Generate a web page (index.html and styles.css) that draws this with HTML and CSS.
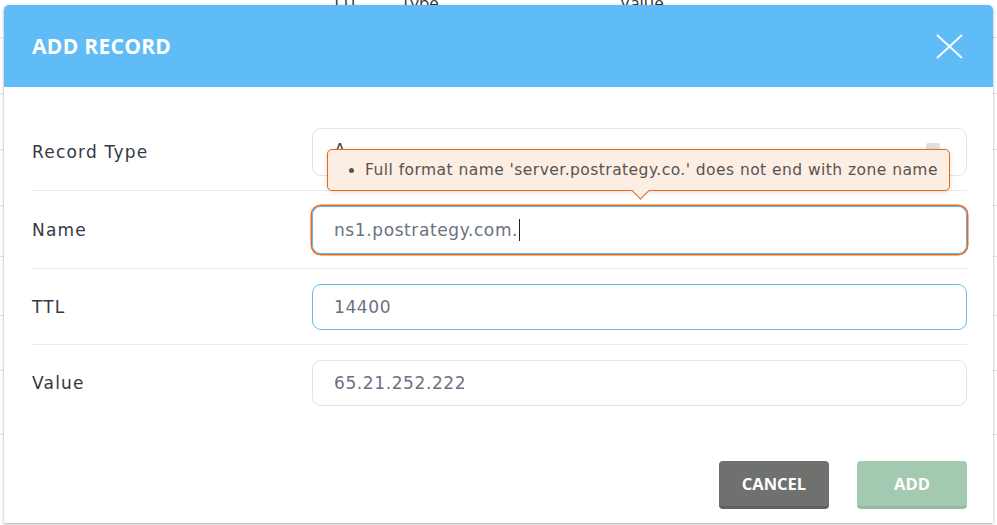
FILE: index.html
```html
<!DOCTYPE html>
<html lang="en">
<head>
  <meta charset="UTF-8">
  <title>Add Record</title>
  <link rel="stylesheet" href="styles.css">
</head>
<body>

  <!-- table behind the modal -->
  <div class="page">
    <div class="thead">
      <span class="th th-ttl">TTL</span>
      <span class="th th-type">Type</span>
      <span class="th th-value">Value</span>
    </div>
    <div class="trow" style="height: 37px"></div>
    <div class="trow" style="height: 55px"></div>
    <div class="trow" style="height: 55px"></div>
    <div class="trow" style="height: 55px"></div>
    <div class="trow" style="height: 50px"></div>
    <div class="trow" style="height: 58px"></div>
    <div class="trow" style="height: 54px"></div>
    <div class="trow" style="height: 63px"></div>
  </div>

  <div class="modal">
    <div class="modal-header">
      <h2>ADD RECORD</h2>
      <svg class="close" width="27" height="25" viewBox="0 0 27 25">
        <path d="M1 1 L26 24 M26 1 L1 24" stroke="#fff" stroke-width="1.8" fill="none"/>
      </svg>
    </div>

    <div class="modal-body">
      <div class="form-row">
        <label>Record Type</label>
        <div class="field select">
          <span class="val">A</span>
          <span class="caret-box"></span>
        </div>
      </div>

      <div class="form-row has-tip">
        <label>Name</label>
        <div class="field field-error">ns1.postrategy.com.<span class="cursor"></span></div>
        <div class="tip">
          <ul>
            <li>Full format name 'server.postrategy.co.' does not end with zone name</li>
          </ul>
          <span class="tip-arrow"></span>
        </div>
      </div>

      <div class="form-row">
        <label>TTL</label>
        <div class="field field-focus">14400</div>
      </div>

      <div class="form-row last">
        <label>Value</label>
        <div class="field">65.21.252.222</div>
      </div>
    </div>

    <div class="modal-footer">
      <button class="btn btn-cancel">CANCEL</button>
      <button class="btn btn-add">ADD</button>
    </div>
  </div>

</body>
</html>
```

FILE: styles.css
```css
body {
  margin: 0;
  background: #fff;
  font-family: "DejaVu Sans", sans-serif;
  overflow: hidden;
}
.page {
  height: 525px;
}
.thead {
  position: relative;
  height: 0;
}
.th {
  position: absolute;
  top: -9px;
  font-family: "Open Sans", sans-serif;
  font-size: 17px;
  color: #333;
}
.th-ttl { left: 332px; }
.th-type { left: 401px; }
.th-value { left: 620px; }
.trow {
  border-bottom: 1px solid #e3e3e3;
}
.modal {
  position: absolute;
  left: 4px;
  top: 5px;
  width: 989px;
  height: 518px;
  background: #fff;
  border-radius: 5px 5px 0 0;
  box-shadow: 0 1px 3px rgba(0, 0, 0, 0.35);
  display: flex;
  flex-direction: column;
}
.modal-header {
  height: 82px;
  background: #60bcf6;
  border-radius: 5px 5px 0 0;
  display: flex;
  align-items: center;
  justify-content: space-between;
  padding: 0 30px 0 28px;
}
.modal-header h2 {
  margin: 0;
  font-family: "Open Sans", sans-serif;
  font-weight: 700;
  font-size: 21px;
  letter-spacing: 0.3px;
  color: #fff;
}
.close {
  margin-top: 1px;
}
.modal-body {
  padding: 26px 26px 0 28px;
}
.form-row {
  display: flex;
  align-items: center;
  padding: 15px 0 14px;
  border-bottom: 1px solid #e8eaee;
  position: relative;
}
.form-row.last {
  border-bottom: none;
}
.form-row label {
  width: 280px;
  flex-shrink: 0;
  font-size: 17px;
  letter-spacing: 1.2px;
  color: #333945;
}
.field {
  flex: 1;
  height: 46px;
  box-sizing: border-box;
  border: 1px solid #dfe4ea;
  border-radius: 9px;
  padding-left: 21px;
  display: flex;
  align-items: center;
  font-size: 17px;
  letter-spacing: 0.6px;
  color: #6b7280;
}
.field.select {
  height: 48px;
  justify-content: space-between;
  padding-right: 26px;
}
.select .val {
  color: #444;
  margin-top: -4px;
}
.caret-box {
  width: 14px;
  height: 12px;
  background: #e0e0e0;
  border-radius: 2px;
  margin-top: -6px;
}
.field-error {
  height: 48px;
  border: 1px solid #60bcf6;
  box-shadow: 0 0 0 1.5px #e8681c;
}
.field-focus {
  border-color: #60bcf6;
}
.cursor {
  display: inline-block;
  width: 1px;
  height: 22px;
  background: #222;
  margin-left: 1px;
}
.tip {
  position: absolute;
  left: 295px;
  top: -42px;
  width: 623px;
  height: 42px;
  box-sizing: border-box;
  background: #fdeee3;
  border: 1px solid #e8681c;
  border-radius: 5px;
  box-shadow: 0 1px 4px rgba(0, 0, 0, 0.15);
  display: flex;
  align-items: center;
}
.tip ul {
  margin: 0;
  padding-left: 37px;
  font-size: 15.5px;
  letter-spacing: 0.45px;
  color: #555;
}
.tip-arrow {
  position: absolute;
  left: 306px;
  bottom: -7px;
  width: 12px;
  height: 12px;
  background: #fdeee3;
  border-right: 1px solid #e8681c;
  border-bottom: 1px solid #e8681c;
  transform: rotate(45deg);
}
.modal-footer {
  display: flex;
  justify-content: flex-end;
  gap: 28px;
  padding: 41px 26px 0 0;
}
.btn {
  width: 110px;
  height: 48px;
  border: none;
  border-radius: 4px;
  font-family: "Open Sans", sans-serif;
  font-weight: 700;
  font-size: 16.5px;
  color: #fff;
  cursor: pointer;
}
.btn-cancel {
  background: #6f716f;
  border-bottom: 3px solid #5d5f5d;
}
.btn-add {
  background: #a3c9b0;
  border-bottom: 3px solid #93bba1;
}
```
